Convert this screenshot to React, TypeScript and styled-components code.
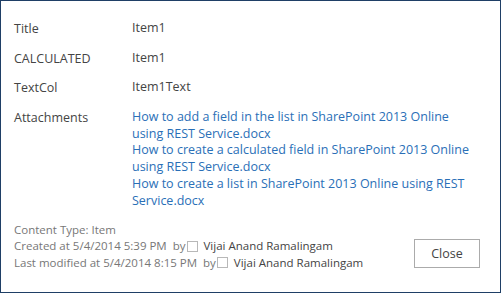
import styled, { createGlobalStyle } from "styled-components";

const GlobalStyle = createGlobalStyle`
  html, body {
    margin: 0;
    padding: 0;
    background: #ffffff;
  }
`;

const fields = [
  { label: "Title", value: "Item1" },
  { label: "CALCULATED", value: "Item1" },
  { label: "TextCol", value: "Item1Text" },
];

const attachments = [
  "How to add a field in the list in SharePoint 2013 Online using REST Service.docx",
  "How to create a calculated field in SharePoint 2013 Online using REST Service.docx",
  "How to create a list in SharePoint 2013 Online using REST Service.docx",
];

function App() {
  return (
    <>
      <GlobalStyle />
      <Dialog>
        <Fields>
          {fields.map((f) => (
            <Row key={f.label}>
              <Label>{f.label}</Label>
              <Value>{f.value}</Value>
            </Row>
          ))}
          <Row>
            <Label>Attachments</Label>
            <Value>
              {attachments.map((a) => (
                <Link key={a}>{a}</Link>
              ))}
            </Value>
          </Row>
        </Fields>
        <Footer>
          <Meta>
            <MetaLine>Content Type: Item</MetaLine>
            <MetaLine>
              Created at 5/4/2014 5:39 PM&nbsp; by<Presence />
              <User>Vijai Anand Ramalingam</User>
            </MetaLine>
            <MetaLine>
              Last modified at 5/4/2014 8:15 PM&nbsp; by<Presence />
              <User>Vijai Anand Ramalingam</User>
            </MetaLine>
          </Meta>
          <CloseButton>Close</CloseButton>
        </Footer>
      </Dialog>
    </>
  );
}

const Dialog = styled.div`
  box-sizing: border-box;
  width: 501px;
  height: 293px;
  border: 1px solid #1f3f66;
  padding: 13px 13px 0 13px;
  font-family: "Open Sans", "Noto Sans", sans-serif;
  color: #444444;
  display: flex;
  flex-direction: column;
`;

const Fields = styled.div`
  display: flex;
  flex-direction: column;
`;

const Row = styled.div`
  display: grid;
  grid-template-columns: 118px 340px;
  padding: 6.25px 0;
`;

const Label = styled.div`
  font-size: 12.5px;
  line-height: 17px;
  color: #444444;
`;

const Value = styled.div`
  font-size: 12.5px;
  line-height: 16.75px;
  color: #444444;
  display: flex;
  flex-direction: column;
`;

const Link = styled.a`
  color: #2a6fb7;
  text-decoration: none;
  cursor: pointer;
`;

const Footer = styled.div`
  display: flex;
  align-items: flex-end;
  justify-content: space-between;
  margin-top: 6px;
  padding-right: 7px;
`;

const Meta = styled.div`
  display: flex;
  flex-direction: column;
`;

const MetaLine = styled.div`
  font-size: 11.5px;
  line-height: 16.5px;
  color: #777777;
  display: flex;
  align-items: center;
  white-space: pre;
`;

const Presence = styled.span`
  display: inline-block;
  width: 9px;
  height: 9px;
  border: 1px solid #b8b8b8;
  margin: 0 6px 0 1px;
`;

const User = styled.span`
  color: #444444;
`;

const CloseButton = styled.button`
  box-sizing: border-box;
  width: 66px;
  height: 29px;
  border: 1px solid #ababab;
  background: #ffffff;
  font-family: "Open Sans", "Noto Sans", sans-serif;
  font-size: 12.5px;
  color: #444444;
  margin-bottom: 3px;
`;

export default App;
